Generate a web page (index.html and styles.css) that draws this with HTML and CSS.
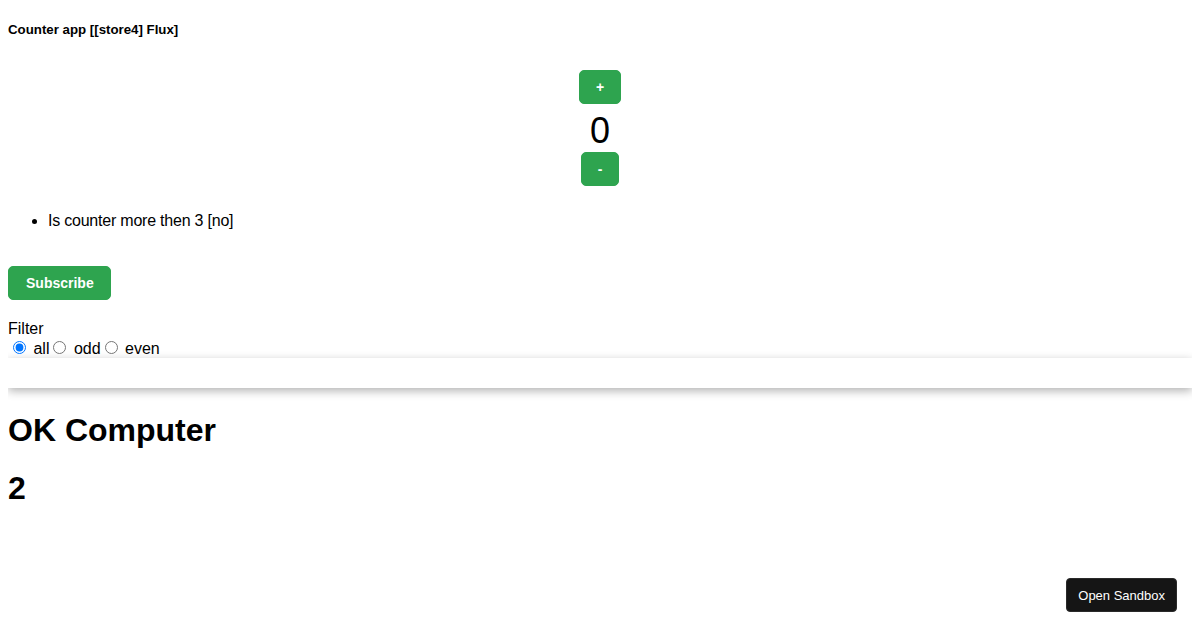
FILE: index.html
```html
<!DOCTYPE html>
<html>
<head>
<meta charset="utf-8">
<link rel="stylesheet" href="styles.css">
</head>
<body>
<h5 class="title">Counter app [[store4] Flux]</h5>
<div class="counter">
  <button class="btn">+</button>
  <div class="value">0</div>
  <button class="btn">-</button>
</div>
<ul class="facts">
  <li>Is counter more then 3 [no]</li>
</ul>
<button class="btn subscribe">Subscribe</button>
<div class="filter">
  <div>Filter</div>
  <div class="radios"><label><input type="radio" name="f" checked> all</label><label><input type="radio" name="f"> odd</label><label><input type="radio" name="f"> even</label></div>
</div>
<div class="panel"></div>
<h1 class="big">OK Computer</h1>
<h1 class="big">2</h1>
<button class="sandbox">Open Sandbox</button>
</body>
</html>
```
FILE: styles.css
```css
html, body {
  background: #fff;
}
body {
  margin: 8px;
  font-family: "Liberation Sans", Arial, sans-serif;
  font-size: 16px;
  color: #000;
}
.title {
  font-size: 13.28px;
  font-weight: bold;
  margin: 14px 0 0;
}
.counter {
  margin-top: 33px;
  display: flex;
  flex-direction: column;
  align-items: center;
}
.btn {
  font-family: "Liberation Sans", Arial, sans-serif;
  font-size: 14px;
  font-weight: bold;
  line-height: 16px;
  color: #fff;
  background: #2ea44f;
  border: 1px solid #2ea44f;
  border-radius: 5px;
  padding: 8px 16px;
  margin: 0;
  cursor: pointer;
}
.value {
  font-size: 36px;
  line-height: 42px;
  margin-top: 6px;
}
.facts {
  margin: 26px 0 0;
  padding-left: 40px;
  letter-spacing: -0.22px;
}
.subscribe {
  margin-top: 36px;
  display: block;
  padding: 8px 16px 8px 17px;
}
.filter {
  margin-top: 20px;
}
.radios {
  height: 19px;
}
.radios input {
  margin: 3px 3px 0 5px;
}
.radios label + label input {
  margin-left: 4px;
}
.panel {
  height: 30px;
  background: #fff;
  box-shadow: 0 3px 10px rgba(0, 0, 0, 0.3);
  margin-top: 0.6px;
  margin-bottom: 24px;
}
.big {
  font-size: 32px;
  font-weight: bold;
  margin: 21.44px 0;
}
.sandbox {
  position: fixed;
  right: 23px;
  bottom: 18px;
  height: 34px;
  padding: 0 11px;
  background: #151515;
  color: #fff;
  border: 1px solid #2a2a2a;
  border-radius: 4px;
  font-family: "Liberation Sans", Arial, sans-serif;
  font-size: 13px;
}
```
